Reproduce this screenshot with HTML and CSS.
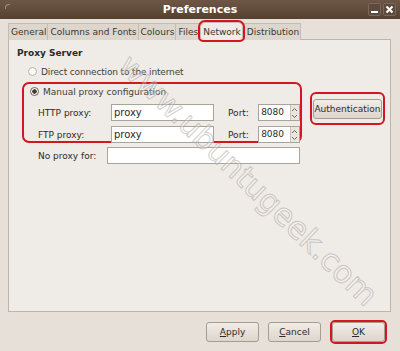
FILE: index.html
```html
<!DOCTYPE html>
<html lang="en">
<head>
    <meta charset="UTF-8">
    <title>Preferences</title>
    <link rel="stylesheet" href="styles.css">
</head>
<body>
    <div class="window">
        <div class="titlebar">
            <span class="corner"></span>
            <span class="title">Preferences</span>
            <div class="wm-buttons">
                <span class="wm-btn">
                    <svg width="9" height="9" viewBox="0 0 9 9"><rect x="1" y="6" width="7" height="2" fill="#fff"/></svg>
                </span>
                <span class="wm-btn">
                    <svg width="9" height="9" viewBox="0 0 9 9"><path d="M1.5 1.5 L7.5 7.5 M7.5 1.5 L1.5 7.5" stroke="#fff" stroke-width="2"/></svg>
                </span>
            </div>
        </div>

        <div class="body">
            <div class="tabs">
                <span class="tab">General</span>
                <span class="tab">Columns and Fonts</span>
                <span class="tab">Colours</span>
                <span class="tab">Files</span>
                <span class="tab active marked">Network</span>
                <span class="tab">Distribution</span>
            </div>

            <div class="panel">
                <h2 class="section">Proxy Server</h2>
                <div class="radio-row direct">
                    <span class="radio"></span>
                    <span>Direct connection to the internet</span>
                </div>

                <div class="proxy-area">
                    <div class="manual-group">
                        <div class="radio-row">
                            <span class="radio checked"></span>
                            <span>Manual proxy configuration</span>
                        </div>
                        <div class="proxy-row">
                            <span class="label">HTTP proxy:</span>
                            <span class="entry host">proxy</span>
                            <span class="port-label">Port:</span>
                            <span class="spin">
                                <span class="spin-value">8080</span>
                                <span class="spin-arrows">
                                    <svg width="7" height="14" viewBox="0 0 7 14"><path d="M1 5 L3.5 2.5 L6 5 M1 9 L3.5 11.5 L6 9" fill="none" stroke="#6d6860" stroke-width="1"/></svg>
                                </span>
                            </span>
                        </div>
                        <div class="proxy-row">
                            <span class="label">FTP proxy:</span>
                            <span class="entry host">proxy</span>
                            <span class="port-label">Port:</span>
                            <span class="spin">
                                <span class="spin-value">8080</span>
                                <span class="spin-arrows">
                                    <svg width="7" height="14" viewBox="0 0 7 14"><path d="M1 5 L3.5 2.5 L6 5 M1 9 L3.5 11.5 L6 9" fill="none" stroke="#6d6860" stroke-width="1"/></svg>
                                </span>
                            </span>
                        </div>
                    </div>
                    <div class="auth-mark">
                        <button class="btn auth">Authentication</button>
                    </div>
                </div>

                <div class="proxy-row noproxy">
                    <span class="label">No proxy for:</span>
                    <span class="entry wide"></span>
                </div>
            </div>

            <div class="actions">
                <button class="btn action"><u>A</u>pply</button>
                <button class="btn action"><u>C</u>ancel</button>
                <span class="ok-mark"><button class="btn action"><u>O</u>K</button></span>
            </div>
        </div>

        <span class="watermark">www.ubuntugeek.com</span>
    </div>
</body>
</html>
```

FILE: styles.css
```css
body {
    margin: 0;
    width: 400px;
    height: 351px;
    overflow: hidden;
    font-family: "DejaVu Sans", sans-serif;
    font-size: 9px;
    color: #2e2a26;
    background: #e6e0d8;
}
.window {
    position: relative;
    height: 351px;
    overflow: hidden;
}
.titlebar {
    height: 19px;
    display: flex;
    align-items: center;
    justify-content: center;
    position: relative;
    background: linear-gradient(#6e5646, #55412f);
}
.title {
    color: #fff;
    font-weight: bold;
    font-size: 11px;
}
.corner {
    position: absolute;
    left: 5px;
    top: 4px;
    width: 4px;
    height: 4px;
    border-left: 1px solid #a08c7c;
    border-top: 1px solid #a08c7c;
    border-top-left-radius: 4px;
}
.wm-buttons {
    position: absolute;
    right: 4px;
    top: 3px;
    display: flex;
    gap: 2px;
}
.wm-btn {
    width: 11px;
    height: 11px;
    display: flex;
    align-items: center;
    justify-content: center;
    background: #5c4a3e;
    border: 1px solid #7a685a;
    border-radius: 2px;
}
.body {
    padding: 4px 8px 0 8px;
}
.tabs {
    display: flex;
    align-items: flex-end;
    height: 17px;
}
.tab {
    height: 16px;
    line-height: 16px;
    padding: 0 1px 0 2px;
    background: #ddd6cc;
    border: 1px solid #c4bcb0;
    border-bottom: none;
    color: #3b3631;
    margin-right: -1px;
}
.tab.active {
    height: 17px;
    line-height: 18px;
    background: #efebe7;
    position: relative;
    z-index: 1;
    margin: 0 1px;
    padding: 0 1px 0 2px;
}
.tab.marked {
    outline: 2px solid #d3161f;
    border-radius: 5px 5px 3px 3px;
}
.panel {
    height: 271px;
    background: #efebe7;
    border: 1px solid #bdb5a9;
    margin-right: 1px;
    padding: 0 0 0 8px;
    margin-top: -1px;
}
.section {
    font-size: 9px;
    font-weight: bold;
    margin: 7px 0 0 0;
    line-height: 12px;
}
.radio-row {
    display: flex;
    align-items: center;
    gap: 4px;
    height: 15px;
    color: #45403a;
}
.direct {
    margin: 5px 0 0 11px;
    letter-spacing: -0.15px;
}
.radio {
    width: 7px;
    height: 7px;
    border-radius: 50%;
    border: 1px solid #b9b2a8;
    background: #fbfaf8;
    display: inline-block;
}
.radio.checked {
    border-color: #6b635a;
    background: radial-gradient(circle, #4a3f36 0 2px, #fbfaf8 2.5px);
}
.proxy-area {
    display: flex;
    align-items: flex-start;
    margin-top: 3px;
}
.manual-group {
    width: 280px;
    box-sizing: border-box;
    border: 2px solid #d3161f;
    border-radius: 7px;
    margin-left: 5px;
    padding: 0 0 0 6px;
    height: 61px;
}
.proxy-row {
    display: flex;
    align-items: center;
    height: 17px;
    margin-top: 5px;
}
.label {
    width: 83px;
    padding-left: 8px;
    box-sizing: border-box;
}
.entry {
    height: 17px;
    box-sizing: border-box;
    border: 1px solid #aaa399;
    background: #fff;
    line-height: 15px;
    padding-left: 2px;
}
.host {
    width: 106px;
    font-size: 10px;
}
.port-label {
    margin-left: 14px;
    width: 31px;
}
.spin {
    display: flex;
    width: 43px;
    height: 17px;
    box-sizing: border-box;
    border: 1px solid #aaa399;
    background: #fff;
}
.spin-value {
    flex: 1;
    line-height: 15px;
    padding-left: 2px;
}
.spin-arrows {
    width: 8px;
    background: #e9e5df;
    border-left: 1px solid #c9c2b8;
    display: flex;
    align-items: center;
    justify-content: center;
}
.auth-mark {
    margin: 10px 0 0 8px;
    border: 2px solid #d3161f;
    border-radius: 6px;
    padding: 5px 1px 4px 1px;
}
.btn {
    font-family: "DejaVu Sans", sans-serif;
    font-size: 9px;
    color: #2e2a26;
    border: 1px solid #a59d92;
    border-radius: 3px;
    background: linear-gradient(#f0ece7, #ddd6cc);
    padding: 0;
    margin: 0;
}
.auth {
    width: 69px;
    height: 20px;
    display: block;
}
.noproxy {
    margin-top: 4px;
}
.noproxy .label {
    width: 90px;
    padding-left: 21px;
}
.wide {
    width: 193px;
}
.actions {
    display: flex;
    justify-content: flex-end;
    align-items: center;
    gap: 9px;
    padding: 8px 5px 0 0;
}
.action {
    width: 53px;
    height: 20px;
}
.ok-mark {
    border: 2px solid #d3161f;
    border-radius: 5px;
    padding: 0;
    display: flex;
}
.watermark {
    position: absolute;
    left: 76px;
    top: 162px;
    transform: rotate(44deg);
    transform-origin: center;
    font-family: "DejaVu Sans", sans-serif;
    font-size: 31px;
    color: rgba(255, 255, 255, 0.25);
    -webkit-text-stroke: 1px rgba(160, 155, 150, 0.5);
    white-space: nowrap;
    pointer-events: none;
}
```
